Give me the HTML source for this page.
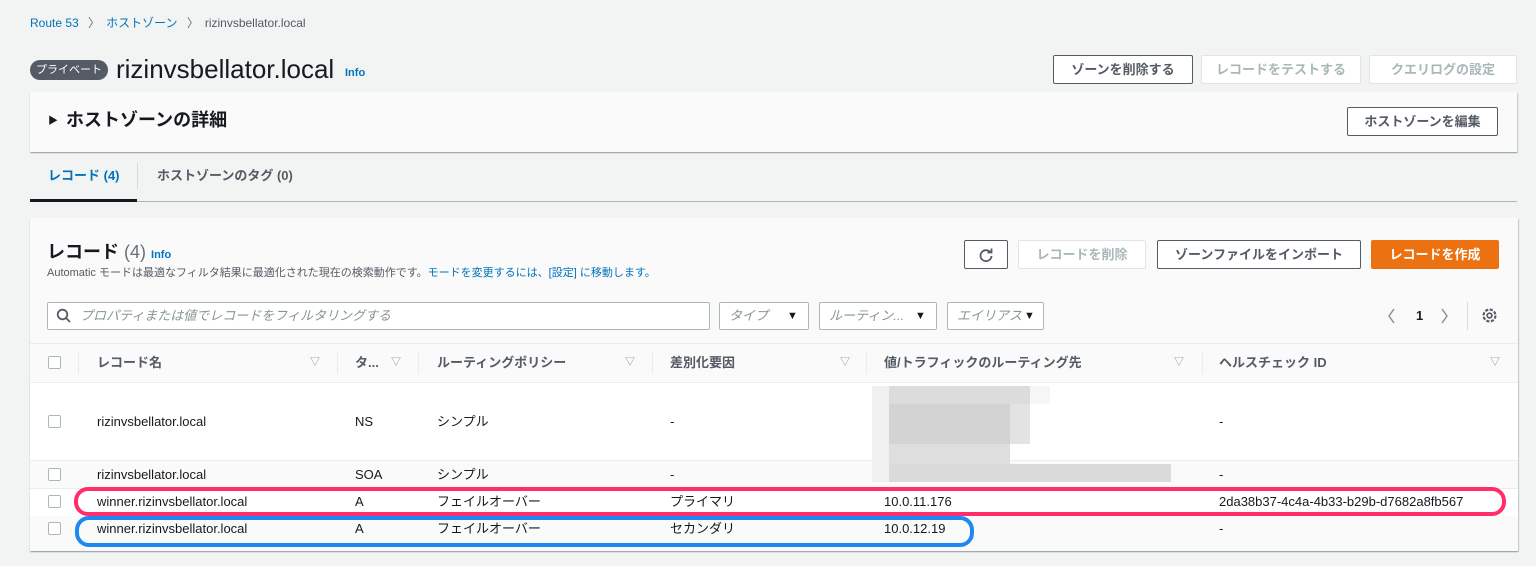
<!DOCTYPE html>
<html><head><meta charset="utf-8"><style>
*{box-sizing:border-box;margin:0;padding:0}
body{width:1536px;height:566px;background:#f2f3f3;font-family:"Liberation Sans","Noto Sans CJK JP",sans-serif;color:#16191f;position:relative;overflow:hidden;font-size:13px;line-height:16px}
.a{position:absolute;white-space:nowrap;line-height:16px}
.btn{position:absolute;border:1px solid #545b64;background:#fff;border-radius:2px;font-weight:bold;font-size:13px;color:#545b64;display:flex;align-items:center;justify-content:center;height:29px;line-height:16px}
.dis{border-color:#e2e4e6;color:#aab7b8}
.blue{color:#0073bb}
.cb{position:absolute;width:13px;height:13px;border:1px solid #aab7b8;border-radius:2px;background:#fff}
.sep{position:absolute;width:1px;background:#eaeded}
.tri{position:absolute;font-size:10px;color:#879596;line-height:12px}
.px{position:absolute}
.dd{position:absolute;font-size:11px;line-height:12px}
</style></head><body>
<div class="a" style="left:30px;top:15px;font-size:12px"><span class="blue">Route 53</span> <span style="color:#687078;margin:0 6px">〉</span><span class="blue">ホストゾーン</span> <span style="color:#687078;margin:0 6px">〉</span><span style="color:#545b64">rizinvsbellator.local</span></div>
<div class="a" style="left:30px;top:60px;width:78px;height:20px;background:#545b64;border-radius:10px;color:#fff;font-size:11px;text-align:center;line-height:20px">プライベート</div>
<div class="a" style="left:116px;top:55px;font-size:26px;line-height:28px">rizinvsbellator.local</div>
<div class="a blue" style="left:345px;top:65px;font-size:11px;font-weight:bold">Info</div>
<div class="btn" style="left:1053px;top:55px;width:140px">ゾーンを削除する</div>
<div class="btn dis" style="left:1201px;top:55px;width:160px">レコードをテストする</div>
<div class="btn dis" style="left:1369px;top:55px;width:148px">クエリログの設定</div>

<div class="a" style="left:30px;top:92px;width:1487px;height:60px;background:#fafafa;box-shadow:0 1px 1px rgba(0,28,36,.3),1px 1px 1px rgba(0,28,36,.15)"></div>
<div class="a" style="left:48px;top:110px;font-size:18px;font-weight:bold;line-height:20px"><span style="font-size:10px;vertical-align:2px;margin-right:8px">▶</span>ホストゾーンの詳細</div>
<div class="btn" style="left:1347px;top:107px;width:151px">ホストゾーンを編集</div>

<div class="a" style="left:30px;top:201px;width:1487px;height:1px;background:#aab7b8"></div>
<div class="a" style="left:30px;top:199px;width:107px;height:3px;background:#16191f"></div>
<div class="a" style="left:137px;top:163px;width:1px;height:26px;background:#d5dbdb"></div>
<div class="a blue" style="left:48px;top:168px;font-weight:bold">レコード (4)</div>
<div class="a" style="left:157px;top:168px;font-weight:bold;color:#545b64">ホストゾーンのタグ (0)</div>

<div class="a" style="left:30px;top:218px;width:1488px;height:333px;background:#fafafa;box-shadow:0 1px 1px rgba(0,28,36,.3),1px 1px 1px rgba(0,28,36,.15)"></div>
<div class="a" style="left:47px;top:242px;font-size:18px;font-weight:bold;line-height:20px">レコード <span style="font-weight:normal;color:#687078">(4)</span> <span class="blue" style="font-size:11px">Info</span></div>
<div class="a" style="left:47px;top:265px;font-size:11px;color:#545b64">Automatic モードは最適なフィルタ結果に最適化された現在の検索動作です。<span class="blue">モードを変更するには、[設定] に移動します。</span></div>
<div class="btn" style="left:964px;top:240px;width:44px;"><svg width="16" height="16" viewBox="0 0 16 16"><path d="M12.5 5.5A5.5 5.5 0 1 0 13.5 9" fill="none" stroke="#545b64" stroke-width="1.8"/><path d="M9.5 5.5h4v-4" fill="none" stroke="#545b64" stroke-width="1.8"/></svg></div>
<div class="btn dis" style="left:1018px;top:240px;width:128px">レコードを削除</div>
<div class="btn" style="left:1157px;top:240px;width:204px">ゾーンファイルをインポート</div>
<div class="btn" style="left:1371px;top:240px;width:128px;background:#ec7211;border-color:#ec7211;color:#fff">レコードを作成</div>

<div class="a" style="left:47px;top:302px;width:663px;height:28px;border:1px solid #aab7b8;border-radius:2px;background:#fff"></div>
<svg class="a" style="left:56px;top:308px" width="16" height="16" viewBox="0 0 16 16"><circle cx="6.5" cy="6.5" r="4.8" fill="none" stroke="#545b64" stroke-width="1.8"/><path d="M10 10l4 4" stroke="#545b64" stroke-width="1.8"/></svg>
<div class="a" style="left:80px;top:308px;font-style:italic;color:#879596">プロパティまたは値でレコードをフィルタリングする</div>
<div class="a" style="left:719px;top:302px;width:90px;height:28px;border:1px solid #aab7b8;border-radius:2px;background:#fff"></div>
<div class="a" style="left:729px;top:308px;font-style:italic;color:#879596">タイプ</div><div class="dd" style="left:787px;top:310px">▼</div>
<div class="a" style="left:819px;top:302px;width:118px;height:28px;border:1px solid #aab7b8;border-radius:2px;background:#fff"></div>
<div class="a" style="left:829px;top:308px;font-style:italic;color:#879596">ルーティン...</div><div class="dd" style="left:915px;top:310px">▼</div>
<div class="a" style="left:947px;top:302px;width:97px;height:28px;border:1px solid #aab7b8;border-radius:2px;background:#fff"></div>
<div class="a" style="left:957px;top:308px;font-style:italic;color:#879596">エイリアス</div><div class="dd" style="left:1024px;top:310px">▼</div>
<svg class="a" style="left:1386px;top:307px" width="70" height="18" viewBox="0 0 70 18"><path d="M8 2L3 9l5 7" fill="none" stroke="#879596" stroke-width="1.5"/><path d="M56 2l5 7-5 7" fill="none" stroke="#879596" stroke-width="1.5"/></svg>
<div class="a" style="left:1416px;top:308px;font-weight:bold">1</div>
<div class="a" style="left:1467px;top:302px;width:1px;height:28px;background:#d5dbdb"></div>
<svg class="a" style="left:1481px;top:307px" width="17" height="17" viewBox="0 0 16 16"><circle cx="8" cy="8" r="5.6" fill="none" stroke="#545b64" stroke-width="2" stroke-dasharray="3 1.4"/><circle cx="8" cy="8" r="2.2" fill="none" stroke="#545b64" stroke-width="1.6"/></svg>

<div class="a" style="left:30px;top:343px;width:1488px;height:1px;background:#eaeded"></div>
<div class="a" style="left:30px;top:382px;width:1488px;height:1px;background:#eaeded"></div>
<div class="a" style="left:30px;top:383px;width:1488px;height:160px;background:#fff"></div>
<div class="a" style="left:30px;top:460px;width:1488px;height:28px;background:#fafafa;border-top:1px solid #eaeded"></div>
<div class="a" style="left:30px;top:488px;width:1488px;height:1px;background:#eaeded"></div>
<div class="a" style="left:30px;top:516px;width:1488px;height:1px;background:#eaeded"></div>
<div class="a" style="left:30px;top:516px;width:1488px;height:27px;background:#fafafa"></div>

<div class="cb" style="left:48px;top:356px"></div>
<div class="sep" style="left:78px;top:352px;height:22px"></div>
<div class="sep" style="left:337px;top:352px;height:22px"></div>
<div class="sep" style="left:418px;top:352px;height:22px"></div>
<div class="sep" style="left:652px;top:352px;height:22px"></div>
<div class="sep" style="left:866px;top:352px;height:22px"></div>
<div class="sep" style="left:1202px;top:352px;height:22px"></div>
<div class="a" style="left:97px;top:355px;font-weight:bold;color:#545b64">レコード名</div><div class="tri" style="left:310px;top:357px">▽</div>
<div class="a" style="left:355px;top:355px;font-weight:bold;color:#545b64">タ...</div><div class="tri" style="left:391px;top:357px">▽</div>
<div class="a" style="left:437px;top:355px;font-weight:bold;color:#545b64">ルーティングポリシー</div><div class="tri" style="left:625px;top:357px">▽</div>
<div class="a" style="left:670px;top:355px;font-weight:bold;color:#545b64">差別化要因</div><div class="tri" style="left:840px;top:357px">▽</div>
<div class="a" style="left:884px;top:355px;font-weight:bold;color:#545b64">値/トラフィックのルーティング先</div><div class="tri" style="left:1174px;top:357px">▽</div>
<div class="a" style="left:1219px;top:355px;font-weight:bold;color:#545b64">ヘルスチェック ID</div><div class="tri" style="left:1490px;top:357px">▽</div>

<div class="px" style="left:872px;top:386px;width:18px;height:96px;background:#f0f0f0"></div>
<div class="px" style="left:889px;top:386px;width:141px;height:18px;background:#dcdcdc"></div>
<div class="px" style="left:1030px;top:386px;width:20px;height:18px;background:#f6f6f6"></div>
<div class="px" style="left:889px;top:404px;width:121px;height:40px;background:#d3d3d3"></div>
<div class="px" style="left:1010px;top:404px;width:20px;height:40px;background:#e3e3e3"></div>
<div class="px" style="left:889px;top:444px;width:121px;height:20px;background:#dedede"></div>
<div class="px" style="left:889px;top:464px;width:282px;height:18px;background:#dadada"></div>

<div class="cb" style="left:48px;top:415px"></div>
<div class="a" style="left:97px;top:414px">rizinvsbellator.local</div>
<div class="a" style="left:355px;top:414px">NS</div>
<div class="a" style="left:437px;top:414px">シンプル</div>
<div class="a" style="left:670px;top:414px">-</div>
<div class="a" style="left:1219px;top:414px">-</div>

<div class="cb" style="left:48px;top:468px"></div>
<div class="a" style="left:97px;top:467px">rizinvsbellator.local</div>
<div class="a" style="left:355px;top:467px">SOA</div>
<div class="a" style="left:437px;top:467px">シンプル</div>
<div class="a" style="left:670px;top:467px">-</div>
<div class="a" style="left:1219px;top:467px">-</div>

<div class="cb" style="left:48px;top:495px"></div>
<div class="a" style="left:97px;top:494px">winner.rizinvsbellator.local</div>
<div class="a" style="left:355px;top:494px">A</div>
<div class="a" style="left:437px;top:494px">フェイルオーバー</div>
<div class="a" style="left:670px;top:494px">プライマリ</div>
<div class="a" style="left:884px;top:494px">10.0.11.176</div>
<div class="a" style="left:1219px;top:494px">2da38b37-4c4a-4b33-b29b-d7682a8fb567</div>

<div class="cb" style="left:48px;top:522px"></div>
<div class="a" style="left:97px;top:521px">winner.rizinvsbellator.local</div>
<div class="a" style="left:355px;top:521px">A</div>
<div class="a" style="left:437px;top:521px">フェイルオーバー</div>
<div class="a" style="left:670px;top:521px">セカンダリ</div>
<div class="a" style="left:884px;top:521px">10.0.12.19</div>
<div class="a" style="left:1219px;top:521px">-</div>

<div class="a" style="left:74px;top:487px;width:1432px;height:29px;border:4px solid #ff2d6a;border-radius:14px"></div>
<div class="a" style="left:75px;top:516px;width:899px;height:31px;border:4px solid #1e88f0;border-radius:14px"></div>
</body></html>
